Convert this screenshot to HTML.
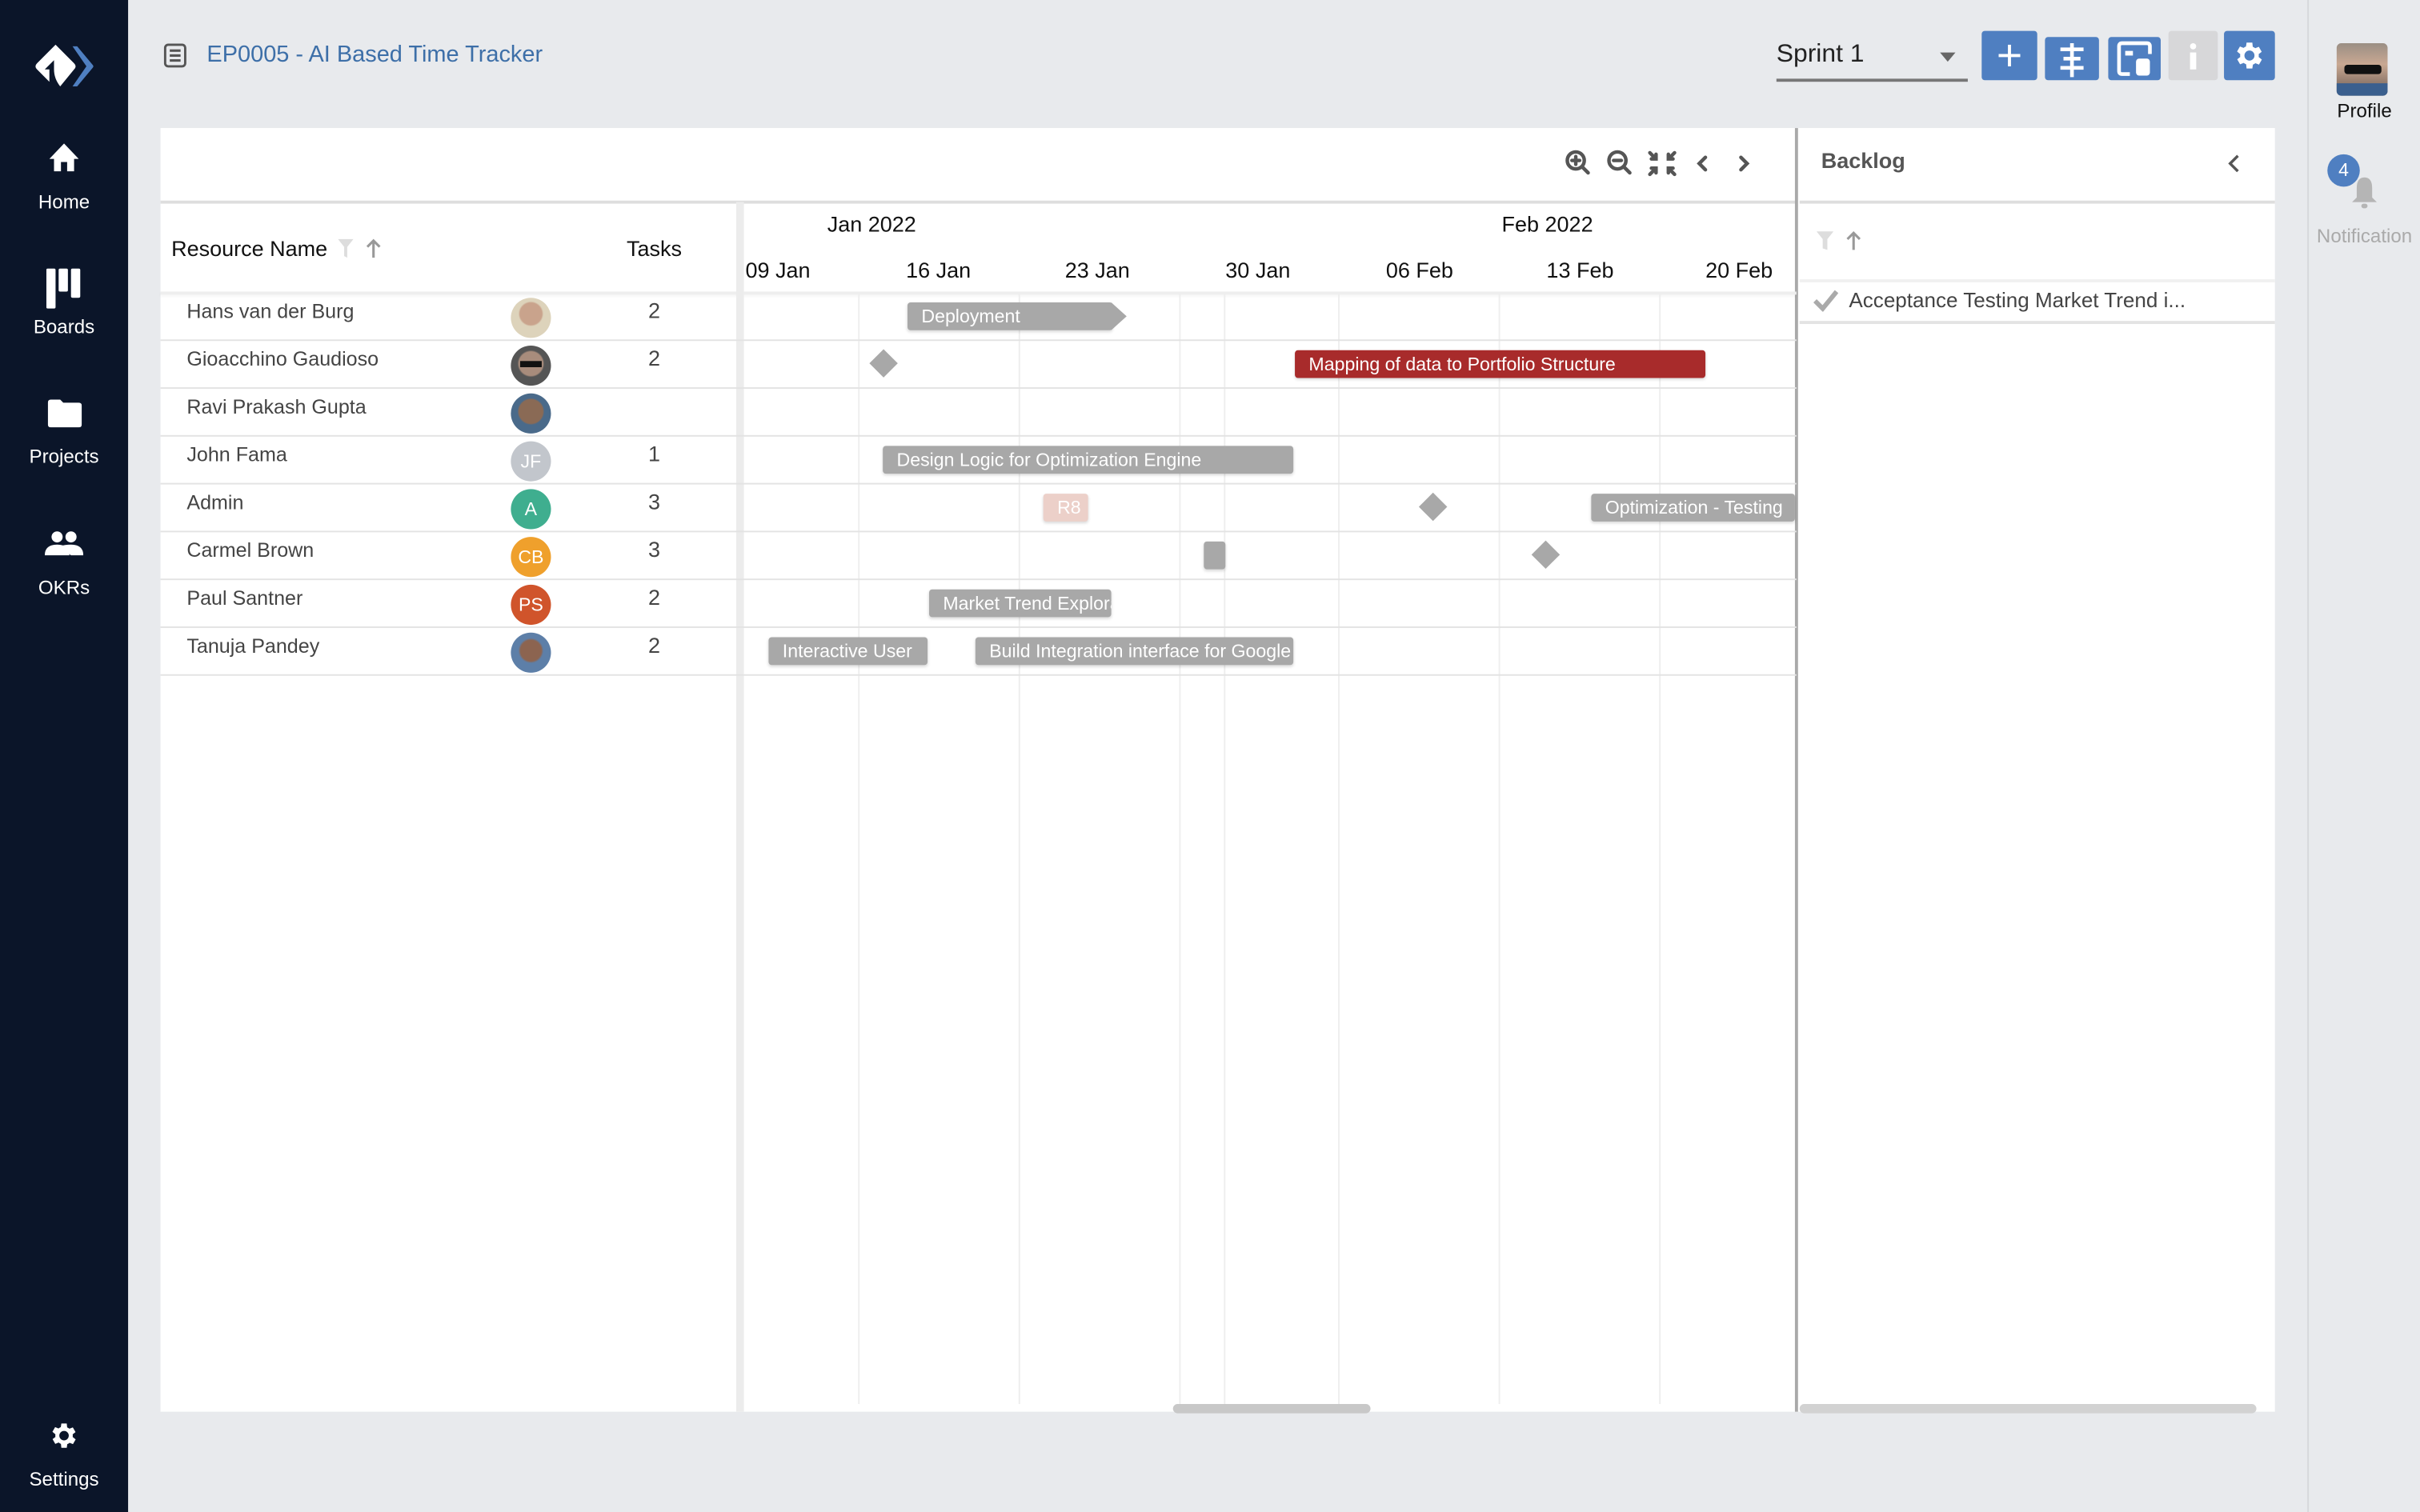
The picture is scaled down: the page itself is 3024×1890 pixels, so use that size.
<!DOCTYPE html>
<html><head><meta charset="utf-8"><style>
*{box-sizing:border-box;margin:0;padding:0}
html,body{width:3024px;height:1890px;overflow:hidden;background:#e8eaed}
#s{position:absolute;left:0;top:0;width:1568px;height:980px;transform:scale(1.928571);transform-origin:0 0;font-family:"Liberation Sans",sans-serif;background:#e8eaed}
.a{position:absolute}
.nav{color:#fff;font-size:12.5px;text-align:center;width:83px}
.row{position:absolute;left:104px;width:1060px;height:31px;border-bottom:1px solid #e3e3e3}
.nm{position:absolute;left:17px;top:4px;font-size:13px;color:#444}
.tk{position:absolute;left:316px;top:3px;font-size:14px;color:#444}
.av{position:absolute;left:227px;top:3px;width:26px;height:26px;border-radius:50%;color:#fff;font-size:12px;text-align:center;line-height:26px}
.bar{position:absolute;height:18px;background:#a8a8a8;border-radius:2px;color:#fff;font-size:12px;line-height:18px;padding-left:9px;overflow:hidden;white-space:nowrap;box-shadow:0 1px 2px rgba(0,0,0,.15)}
.dm{position:absolute;width:13px;height:13px;background:#a8a8a8;transform:rotate(45deg)}
.vl{position:absolute;top:190px;height:720px;width:1px;background:#eeeeee}
.btn{position:absolute;top:20px;height:32px;background:#4f7fc1;border-radius:2px}
.day{position:absolute;top:167px;font-size:14px;color:#111}
</style></head><body><div id="s">
<div class="a" style="left:0;top:0;width:83px;height:980px;background:#0b1529"></div>
<svg class="a" style="left:22px;top:27px" width="40" height="32" viewBox="0 0 40 32"><path d="M14 2 L2 14 Q0 16 2 18 L10 26 L10 18 L7 18 L13 12 L13 18 Q13 24 17 29 L26 18 Q28 16 26 14 Z" fill="#fff"/><path d="M28 3 L38 15 Q39 16 38 17 L28 29 L25 29 L34 16 L25 3 Z" fill="#4f7fc1"/></svg>
<svg class="a" style="left:31px;top:92px" width="21" height="20" viewBox="0 0 21 20"><path d="M10.5 1 L1 11 H4 V19 H8.5 V13 H12.5 V19 H17 V11 H20 Z" fill="#fff"/></svg>
<div class="a nav" style="top:124px">Home</div>
<svg class="a" style="left:30px;top:174px" width="23" height="26" viewBox="0 0 23 26"><rect x="0" y="0" width="6" height="26" rx="1" fill="#fff"/><rect x="8" y="0" width="6" height="15" rx="1" fill="#fff"/><rect x="16" y="0" width="6" height="19" rx="1" fill="#fff"/></svg>
<div class="a nav" style="top:205px">Boards</div>
<svg class="a" style="left:31px;top:259px" width="22" height="18" viewBox="0 0 22 18"><path d="M0 2 Q0 0 2 0 H8 L10 2 H20 Q22 2 22 4 V16 Q22 18 20 18 H2 Q0 18 0 16 Z" fill="#fff"/></svg>
<div class="a nav" style="top:289px">Projects</div>
<svg class="a" style="left:29px;top:344px" width="25" height="16" viewBox="0 0 25 16"><circle cx="8" cy="4" r="3.6" fill="#fff"/><circle cx="17" cy="4" r="3.6" fill="#fff"/><path d="M0 16 Q0 9 8 9 Q16 9 16 16 Z M10 10 Q13 9 17 9 Q25 9 25 16 H17 Z" fill="#fff"/></svg>
<div class="a nav" style="top:374px">OKRs</div>
<svg class="a" style="left:31px;top:920px" width="21" height="21" viewBox="0 0 24 24"><path fill="#fff" d="M19.4 13a7.5 7.5 0 0 0 0-2l2.1-1.6-2-3.5-2.5 1a7 7 0 0 0-1.7-1L15 3h-4l-.4 2.7a7 7 0 0 0-1.7 1l-2.5-1-2 3.5L6.6 11a7.5 7.5 0 0 0 0 2l-2.1 1.6 2 3.5 2.5-1a7 7 0 0 0 1.7 1L11 21h4l.4-2.7a7 7 0 0 0 1.7-1l2.5 1 2-3.5ZM13 15.5a3.5 3.5 0 1 1 0-7 3.5 3.5 0 0 1 0 7Z" transform="translate(-1 0)"/></svg>
<div class="a nav" style="top:952px">Settings</div>
<svg class="a" style="left:106px;top:28px" width="15" height="16" viewBox="0 0 15 16"><rect x="1" y="1" width="13" height="14" rx="2" fill="none" stroke="#555" stroke-width="1.5"/><rect x="4" y="4" width="7" height="1.6" fill="#555"/><rect x="4" y="7.2" width="7" height="1.6" fill="#555"/><rect x="4" y="10.4" width="7" height="1.6" fill="#555"/></svg>
<div class="a" style="left:134px;top:27px;font-size:15px;color:#3d6fa8">EP0005 - AI Based Time Tracker</div>
<div class="a" style="left:1151px;top:26px;font-size:16.5px;color:#222">Sprint 1</div>
<div class="a" style="left:1257px;top:34px;width:0;height:0;border-left:5px solid transparent;border-right:5px solid transparent;border-top:6px solid #666"></div>
<div class="a" style="left:1151px;top:51px;width:124px;height:1.5px;background:#777"></div>
<div class="btn" style="left:1284px;width:36px"><div class="a" style="left:11px;top:15px;width:14px;height:2px;background:#fff"></div><div class="a" style="left:17px;top:9px;width:2px;height:14px;background:#fff"></div></div>
<div class="btn" style="left:1325px;width:35px;top:24px;height:28px"><svg width="35" height="28" viewBox="0 0 35 28"><path d="M17.5 4V26M10 8H25M12 14H23M10 20H25" stroke="#fff" stroke-width="2.4" fill="none"/></svg></div>
<div class="btn" style="left:1366px;width:34px;top:24px;height:28px"><svg width="34" height="28" viewBox="0 0 34 28"><path d="M14 24H9Q7 24 7 22V6Q7 4 9 4H25Q27 4 27 6V11" stroke="#fff" stroke-width="2.4" fill="none"/><rect x="11" y="9" width="5" height="3" fill="#fff"/><rect x="18" y="14" width="9" height="11" rx="2" fill="#fff"/></svg></div>
<div class="btn" style="left:1405px;width:32px;background:#d7d7d9"><div class="a" style="left:14px;top:8px;width:4px;height:4px;border-radius:2px;background:#fff"></div><div class="a" style="left:14px;top:14px;width:4px;height:11px;background:#fff"></div></div>
<div class="btn" style="left:1441px;width:33px"><svg width="33" height="32" viewBox="0 0 24 24" style="position:absolute;left:0;top:0"><g transform="translate(12 12) scale(0.7) translate(-12 -12)"><path fill="#fff" d="M19.4 13a7.5 7.5 0 0 0 0-2l2.1-1.6-2-3.5-2.5 1a7 7 0 0 0-1.7-1L15 3h-4l-.4 2.7a7 7 0 0 0-1.7 1l-2.5-1-2 3.5L6.6 11a7.5 7.5 0 0 0 0 2l-2.1 1.6 2 3.5 2.5-1a7 7 0 0 0 1.7 1L11 21h4l.4-2.7a7 7 0 0 0 1.7-1l2.5 1 2-3.5ZM13 15.5a3.5 3.5 0 1 1 0-7 3.5 3.5 0 0 1 0 7Z" transform="translate(-1 0)"/></g></svg></div>
<div class="a" style="left:1495px;top:0;width:1px;height:980px;background:#d6d8db"></div>
<div class="a" style="left:1514px;top:28px;width:33px;height:34px;border-radius:3px;background:linear-gradient(#9a8e84,#c9a892 40%,#6b5a52)"><div class="a" style="left:5px;top:14px;width:24px;height:6px;background:#111;border-radius:2px"></div><div class="a" style="left:0;top:26px;width:33px;height:8px;background:#3a5f8e;border-radius:0 0 3px 3px"></div></div>
<div class="a" style="left:1500px;top:65px;width:64px;text-align:center;font-size:12.5px;color:#111">Profile</div>
<div class="a" style="left:1508px;top:100px;width:21px;height:21px;border-radius:50%;background:#4f7fc1;color:#fff;font-size:12px;text-align:center;line-height:21px">4</div>
<svg class="a" style="left:1522px;top:114px" width="20" height="22" viewBox="0 0 20 22"><path d="M10 1Q15 1 15 8V14L18 17H2L5 14V8Q5 1 10 1Z" fill="#b5b5b5"/><rect x="8" y="18" width="4" height="3" rx="1.5" fill="#b5b5b5"/></svg>
<div class="a" style="left:1497px;top:146px;width:70px;text-align:center;font-size:12.5px;color:#aaa">Notification</div>
<div class="a" style="left:104px;top:83px;width:1370px;height:832px;background:#fff"></div>
<div class="a" style="left:104px;top:130px;width:1060px;height:2px;background:#dedede"></div>
<div class="a" style="left:1166px;top:130px;width:308px;height:2px;background:#dedede"></div>
<svg class="a" style="left:1012px;top:96px" width="130" height="20" viewBox="0 0 130 20"><g stroke="#555" stroke-width="2.3" fill="none" stroke-linecap="round"><circle cx="9" cy="8" r="5.5"/><path d="M13 12L17 16M6.5 8H11.5M9 5.5V10.5"/><circle cx="36" cy="8" r="5.5"/><path d="M40 12L44 16M33.5 8H38.5"/><path d="M57 3L61 7M61 4V7H58M73 3L69 7M69 4V7H72M57 17L61 13M61 16V13H58M73 17L69 13M69 16V13H72"/><path d="M93 6L89 10L93 14M116 6L120 10L116 14"/></g></svg>
<div class="a" style="left:1163px;top:83px;width:2px;height:832px;background:#a9a9a9"></div>
<div class="a" style="left:111px;top:153px;font-size:14px;color:#111">Resource Name</div>
<svg class="a" style="left:219px;top:154px" width="32" height="14" viewBox="0 0 32 14"><path d="M0 1H10L6 6V13L4 12V6Z" fill="#ddd"/><path d="M23 13V2M19 6L23 2L27 6" stroke="#999" stroke-width="1.6" fill="none"/></svg>
<div class="a" style="left:406px;top:153px;font-size:14px;color:#111">Tasks</div>
<div class="a" style="left:536px;top:137px;font-size:14px;color:#111">Jan 2022</div>
<div class="a" style="left:973px;top:137px;font-size:14px;color:#111">Feb 2022</div>
<div class="day" style="left:483px">09 Jan</div><div class="day" style="left:587px">16 Jan</div><div class="day" style="left:690px">23 Jan</div><div class="day" style="left:794px">30 Jan</div><div class="day" style="left:898px">06 Feb</div><div class="day" style="left:1002px">13 Feb</div><div class="day" style="left:1105px">20 Feb</div>
<div class="a" style="left:104px;top:189px;width:1060px;height:2px;background:#eee;box-shadow:0 1px 2px rgba(0,0,0,.05)"></div>
<div class="vl" style="left:556px"></div><div class="vl" style="left:660px"></div><div class="vl" style="left:764px"></div><div class="vl" style="left:793px"></div><div class="vl" style="left:867px"></div><div class="vl" style="left:971px"></div><div class="vl" style="left:1075px"></div>
<div class="a" style="left:477px;top:131px;width:5px;height:784px;background:#ececec"></div>
<div class="row" style="top:190px"><div class="nm">Hans van der Burg</div><div class="av" style="background:radial-gradient(circle at 50% 40%,#c9a38c 35%,#ddd3bb 40%)"></div><div class="tk">2</div></div>
<div class="row" style="top:221px"><div class="nm">Gioacchino Gaudioso</div><div class="av" style="background:radial-gradient(circle at 50% 45%,#a88c7c 40%,#555 45%)"><div class="a" style="left:6px;top:10px;width:14px;height:4px;background:#111"></div></div><div class="tk">2</div></div>
<div class="row" style="top:252px"><div class="nm">Ravi Prakash Gupta</div><div class="av" style="background:radial-gradient(circle at 50% 45%,#8a6a55 40%,#4a6a8a 45%)"></div></div>
<div class="row" style="top:283px"><div class="nm">John Fama</div><div class="av" style="background:#c2c6cc">JF</div><div class="tk">1</div></div>
<div class="row" style="top:314px"><div class="nm">Admin</div><div class="av" style="background:#3fae8f">A</div><div class="tk">3</div></div>
<div class="row" style="top:345px"><div class="nm">Carmel Brown</div><div class="av" style="background:#efa02c">CB</div><div class="tk">3</div></div>
<div class="row" style="top:376px"><div class="nm">Paul Santner</div><div class="av" style="background:#d0542b">PS</div><div class="tk">2</div></div>
<div class="row" style="top:407px"><div class="nm">Tanuja Pandey</div><div class="av" style="background:radial-gradient(circle at 50% 45%,#8c6450 35%,#5d7fa8 42%)"></div><div class="tk">2</div></div>
<div class="bar" style="left:588px;top:196px;width:133px">Deployment</div>
<div class="a" style="left:720px;top:196px;width:0;height:0;border-top:9px solid transparent;border-bottom:9px solid transparent;border-left:10px solid #a8a8a8"></div>
<div class="dm" style="left:566px;top:229px"></div>
<div class="bar" style="left:839px;top:227px;width:266px;background:#a82b2b">Mapping of data to Portfolio Structure</div>
<div class="bar" style="left:572px;top:289px;width:266px">Design Logic for Optimization Engine</div>
<div class="bar" style="left:676px;top:320px;width:29px;background:#ecd0c9;padding-left:9px">R8</div>
<div class="dm" style="left:922px;top:322px"></div>
<div class="bar" style="left:1031px;top:320px;width:132px">Optimization - Testing</div>
<div class="bar" style="left:780px;top:351px;width:14px;padding:0"></div>
<div class="dm" style="left:995px;top:353px"></div>
<div class="bar" style="left:602px;top:382px;width:118px">Market Trend Exploration</div>
<div class="bar" style="left:498px;top:413px;width:103px">Interactive User</div>
<div class="bar" style="left:632px;top:413px;width:206px">Build Integration interface for Google</div>
<div class="a" style="left:760px;top:910px;width:128px;height:6px;border-radius:3px;background:#c8c8c8"></div>
<div class="a" style="left:1166px;top:910px;width:296px;height:6px;border-radius:3px;background:#d2d2d2"></div>
<div class="a" style="left:1180px;top:96px;font-size:14px;font-weight:bold;color:#555">Backlog</div>
<svg class="a" style="left:1441px;top:99px" width="12" height="14" viewBox="0 0 12 14"><path d="M9 2L4 7L9 12" stroke="#555" stroke-width="1.8" fill="none"/></svg>
<svg class="a" style="left:1177px;top:149px" width="32" height="14" viewBox="0 0 32 14"><path d="M0 1H11L7 6V13L4 12V6Z" fill="#ddd"/><path d="M24 13V2M20 6L24 2L28 6" stroke="#999" stroke-width="1.6" fill="none"/></svg>
<div class="a" style="left:1166px;top:181px;width:308px;height:2px;background:#f0f0f0"></div>
<div class="a" style="left:1166px;top:208px;width:308px;height:1.5px;background:#e3e3e3"></div>
<svg class="a" style="left:1175px;top:188px" width="16" height="14" viewBox="0 0 16 14"><path d="M1 7L6 12L15 1" stroke="#aaa" stroke-width="3" fill="none"/></svg>
<div class="a" style="left:1198px;top:187px;font-size:13.5px;color:#444">Acceptance Testing Market Trend i...</div>
</div></body></html>
